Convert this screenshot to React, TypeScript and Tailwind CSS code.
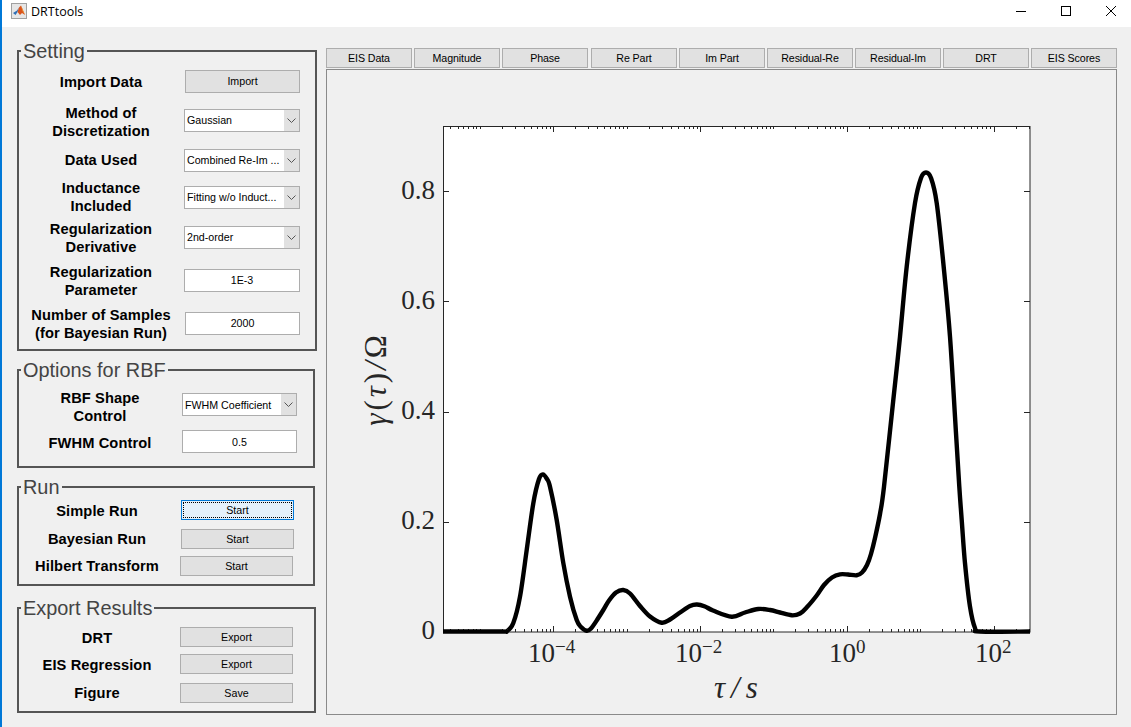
import type { ReactNode } from "react";

const TABS = ["EIS Data", "Magnitude", "Phase", "Re Part", "Im Part", "Residual-Re", "Residual-Im", "DRT", "EIS Scores"];

// curve traced from the plot, in page pixels
const CURVE: [number, number][] = [
  [443, 631.5], [500, 631.5], [507, 631], [513.3, 623], [520, 596.7], [526.7, 550], [533.3, 503.3], [539, 479],
  [543, 474.5], [547, 479], [550, 486.7], [556.7, 520], [563.3, 563], [570, 596.7], [576.7, 620], [581, 627],
  [586.7, 630.7], [591, 628.5], [597, 620], [603.3, 610], [609, 600.5], [616, 592.5], [623.3, 590], [630, 593.5],
  [640, 606], [650, 616.5], [661.7, 622.7], [670, 619.5], [680, 612.5], [690, 606], [697, 604.5], [705, 606.5],
  [713, 610.5], [731.7, 616.7], [745, 612.5], [758.3, 609], [770, 610], [780, 612.5], [791.7, 615.3], [800, 613.5],
  [808, 606], [816.7, 595.5], [824, 585], [832, 577.5], [840, 574.3], [848, 574.5], [856.7, 575.3], [862, 572.5],
  [867, 565], [871, 554], [875, 538], [880, 514], [884, 486.7], [893.3, 400], [900, 336.7], [906.7, 266.7],
  [915, 203], [921, 178], [926, 172.5], [931, 178], [936.7, 203], [944, 270], [950, 336.7], [955, 416.7],
  [959.3, 486.7], [961.7, 520], [965, 563.3], [970, 606.7], [975, 628], [980, 631.5], [1030, 631.5],
];

function curvePath() {
  let d = `M${CURVE[0][0]} ${CURVE[0][1]}`;
  for (let i = 0; i < CURVE.length - 1; i++) {
    const p0 = CURVE[Math.max(i - 1, 0)];
    const p1 = CURVE[i];
    const p2 = CURVE[i + 1];
    const p3 = CURVE[Math.min(i + 2, CURVE.length - 1)];
    const c1x = p1[0] + (p2[0] - p0[0]) / 6;
    const c1y = p1[1] + (p2[1] - p0[1]) / 6;
    const c2x = p2[0] - (p3[0] - p1[0]) / 6;
    const c2y = p2[1] - (p3[1] - p1[1]) / 6;
    d += `C${c1x.toFixed(1)} ${c1y.toFixed(1)} ${c2x.toFixed(1)} ${c2y.toFixed(1)} ${p2[0]} ${p2[1]}`;
  }
  return d;
}

const xOf = (log: number) => 846.7 + 73.4 * log;
const yOf = (v: number) => 632 - 551 * v;

function xTicks() {
  const ticks: { x: number; major: boolean }[] = [];
  for (let n = -6; n <= 2; n++) {
    for (let m = 1; m <= 9; m++) {
      const x = xOf(n + Math.log10(m));
      if (x > 444 && x < 1029) ticks.push({ x, major: m === 1 && n % 2 === 0 });
    }
  }
  return ticks;
}

function Chart() {
  const ax = "#262626";
  const serif = "'Liberation Serif', serif";
  return (
    <svg viewBox="327 70 789 644" width="789" height="644" className="block">
      <rect x="443.5" y="126.5" width="586.5" height="505.5" fill="#fff" stroke={ax} strokeWidth="1" />
      {xTicks().map((t) => {
        const len = t.major ? 6 : 3;
        const x = Math.round(t.x) + 0.5;
        return (
          <g key={t.x} stroke={ax} strokeWidth="1">
            <line x1={x} x2={x} y1={632} y2={632 - len} />
            <line x1={x} x2={x} y1={126} y2={126 + len} />
          </g>
        );
      })}
      {[0.2, 0.4, 0.6, 0.8].map((v) => {
        const y = Math.round(yOf(v)) + 0.5;
        return (
          <g key={v} stroke={ax} strokeWidth="1">
            <line x1={443} x2={449} y1={y} y2={y} />
            <line x1={1024} x2={1030} y1={y} y2={y} />
          </g>
        );
      })}
      <path d={curvePath()} fill="none" stroke="#000" strokeWidth="4.4" strokeLinejoin="round" />
      <g fontFamily={serif} fontSize="27" fill={ax} textAnchor="end">
        <text x="435" y="639">0</text>
        <text x="435" y="529">0.2</text>
        <text x="435" y="419">0.4</text>
        <text x="435" y="309">0.6</text>
        <text x="435" y="199">0.8</text>
      </g>
      <g fontFamily={serif} fontSize="27" fill={ax}>
        {[
          { x: 528, e: "−4" },
          { x: 675, e: "−2" },
          { x: 829, e: "0" },
          { x: 975, e: "2" },
        ].map((t) => (
          <text key={t.e} x={t.x} y="662">
            10
            <tspan fontSize="19" dy="-9">{t.e}</tspan>
          </text>
        ))}
      </g>
      <text x="714" y="698" fontFamily={serif} fontSize="31" fontStyle="italic" fill={ax} letterSpacing="6">
        τ/s
      </text>
      <text
        transform="translate(386 379) rotate(-90)"
        textAnchor="middle"
        fontFamily={serif}
        fontSize="31"
        fill={ax}
        letterSpacing="3"
      >
        <tspan fontStyle="italic">γ</tspan>(<tspan fontStyle="italic">τ</tspan>)<tspan fontStyle="italic">/</tspan>Ω
      </text>
    </svg>
  );
}

function Panel({ title, className, children }: { title: string; className: string; children: ReactNode }) {
  return (
    <div className={`relative border-2 border-[#555] ${className}`}>
      <span className="absolute left-[2px] top-[-13px] bg-[#f0f0f0] pl-[2px] pr-[2px] text-[19.9px] leading-[24px] text-[#444]">
        {title}
      </span>
      {children}
    </div>
  );
}

function Row({ label, labelClass, className, children }: { label: ReactNode; labelClass: string; className: string; children: ReactNode }) {
  return (
    <div className={`flex items-center ${className}`}>
      <div className={`text-center text-[14.67px] font-bold leading-[18px] tracking-[0.1px] text-black ${labelClass}`}>{label}</div>
      {children}
    </div>
  );
}

function Btn({ text, className }: { text: string; className: string }) {
  return (
    <button type="button" className={`border border-[#adadad] bg-[#e1e1e1] text-[10.67px] text-black ${className}`}>
      {text}
    </button>
  );
}

function Drop({ text, className }: { text: string; className: string }) {
  return (
    <div className={`flex h-[23px] items-stretch border border-[#adadad] bg-white text-[10.67px] text-black ${className}`}>
      <span className="flex flex-1 items-center overflow-hidden whitespace-nowrap pl-[2px]">{text}</span>
      <span className="flex w-[15px] items-center justify-center bg-[#e1e1e1]">
        <svg width="9" height="5" viewBox="0 0 9 5" fill="none" stroke="#555" strokeWidth="1">
          <path d="M0.5 0.5L4.5 4.5L8.5 0.5" />
        </svg>
      </span>
    </div>
  );
}

function Field({ text, className }: { text: string; className: string }) {
  return (
    <div className={`flex h-[23px] items-center justify-center border border-[#adadad] bg-white text-[10.67px] text-black ${className}`}>
      {text}
    </div>
  );
}

function MatlabIcon() {
  return (
    <svg width="16" height="16" viewBox="0 0 16 16" className="shrink-0">
      <rect x="0.5" y="0.5" width="15" height="15" fill="#e6e6e6" stroke="#a0a0a0" />
      <path d="M2 10L6 7.5L8 4.5L6.5 9L4.5 12Z" fill="#2f6fb5" />
      <path d="M8 4.5L10 2.5L14 12L11 10L9 12L6.5 9Z" fill="#d9541e" />
      <path d="M10 2.5L14 12L11.5 8Z" fill="#f0a030" />
    </svg>
  );
}

export default function App() {
  return (
    <div className="flex h-[727px] w-[1131px] flex-col overflow-hidden border-l-2 border-[#0078d7] bg-[#f0f0f0] font-['Liberation_Sans',sans-serif]">
      {/* Title bar */}
      <div className="flex h-[27px] shrink-0 items-start bg-white pl-[9px] pr-[15px] pt-[3px]">
        <MatlabIcon />
        <span className="ml-[4px] font-['Open_Sans',sans-serif] text-[12.5px] leading-[18px] text-black">DRTtools</span>
        <div className="ml-auto mt-[3px] flex items-center gap-[35px]">
          <svg width="10" height="10" viewBox="0 0 10 10" stroke="#000" strokeWidth="1">
            <path d="M0 5.5H10" />
          </svg>
          <svg width="10" height="10" viewBox="0 0 10 10" fill="none" stroke="#000" strokeWidth="1">
            <rect x="0.5" y="0.5" width="9" height="9" />
          </svg>
          <svg width="10" height="10" viewBox="0 0 10 10" stroke="#000" strokeWidth="1">
            <path d="M0 0L10 10M10 0L0 10" />
          </svg>
        </div>
      </div>

      <div className="flex flex-1">
        {/* Left controls */}
        <div className="w-[324px] shrink-0 pl-[15px] pt-[23px]">
          <Panel title="Setting" className="h-[301px] w-[300px] pt-[10px]">
            <Row label="Import Data" labelClass="w-[164px] pt-[2px]" className="h-[38px]">
              <Btn text="Import" className="ml-[2px] h-[23px] w-[115px]" />
            </Row>
            <Row label={<>Method of<br />Discretization</>} labelClass="w-[164px] pt-[4px]" className="h-[40px]">
              <Drop text="Gaussian" className="ml-[1px] w-[116px]" />
            </Row>
            <Row label="Data Used" labelClass="w-[164px]" className="h-[40px]">
              <Drop text="Combined Re-Im ..." className="ml-[1px] w-[116px]" />
            </Row>
            <Row label={<>Inductance<br />Included</>} labelClass="w-[164px]" className="h-[34px]">
              <Drop text="Fitting w/o Induct..." className="ml-[1px] w-[116px]" />
            </Row>
            <Row label={<>Regularization<br />Derivative</>} labelClass="w-[164px] pt-[2px]" className="h-[46px]">
              <Drop text="2nd-order" className="ml-[1px] w-[116px]" />
            </Row>
            <Row label={<>Regularization<br />Parameter</>} labelClass="w-[164px] pt-[2px]" className="h-[40px]">
              <Field text="1E-3" className="ml-[1px] w-[116px]" />
            </Row>
            <Row label={<>Number of Samples<br />(for Bayesian Run)</>} labelClass="w-[164px] pt-[2px]" className="h-[46px]">
              <Field text="2000" className="ml-[2px] w-[115px]" />
            </Row>
          </Panel>

          <Panel title="Options for RBF" className="mt-[18px] h-[99px] w-[298px] pt-[15px]">
            <Row label={<>RBF Shape<br />Control</>} labelClass="w-[162px] pt-[4px]" className="h-[37px]">
              <Drop text="FWHM Coefficient" className="ml-[1px] w-[115px]" />
            </Row>
            <Row label="FWHM Control" labelClass="w-[162px] pt-[2px]" className="h-[37px]">
              <Field text="0.5" className="ml-[1px] w-[115px]" />
            </Row>
          </Panel>

          <Panel title="Run" className="mt-[18px] h-[100px] w-[298px] pt-[8px]">
            <Row label="Simple Run" labelClass="w-[156px] pt-[1px]" className="h-[28px]">
              <button
                type="button"
                className="ml-[6px] h-[20px] w-[113px] border border-[#0078d7] bg-[#e5f1fb] p-[1px] text-[10.67px] text-black"
              >
                <span className="flex h-full w-full items-center justify-center border border-dotted border-black">Start</span>
              </button>
            </Row>
            <Row label="Bayesian Run" labelClass="w-[156px]" className="h-[29px]">
              <Btn text="Start" className="ml-[6px] h-[20px] w-[113px]" />
            </Row>
            <Row label="Hilbert Transform" labelClass="w-[156px]" className="h-[26px]">
              <Btn text="Start" className="ml-[5px] h-[20px] w-[113px]" />
            </Row>
          </Panel>

          <Panel title="Export Results" className="mt-[21px] h-[106px] w-[299px] pt-[14px]">
            <Row label="DRT" labelClass="w-[156px] pt-[2px]" className="h-[27px]">
              <Btn text="Export" className="ml-[5px] h-[20px] w-[113px]" />
            </Row>
            <Row label="EIS Regression" labelClass="w-[156px] pt-[2px]" className="h-[27px]">
              <Btn text="Export" className="ml-[5px] h-[20px] w-[113px]" />
            </Row>
            <Row label="Figure" labelClass="w-[156px]" className="h-[31px]">
              <Btn text="Save" className="ml-[5px] h-[20px] w-[113px]" />
            </Row>
          </Panel>
        </div>

        {/* Plot area */}
        <div className="w-[791px] shrink-0 pt-[21px]">
          <div className="flex gap-[2px]">
            {TABS.map((tab) => (
              <button
                type="button"
                key={tab}
                className={`h-[20px] w-[86px] border border-[#adadad] bg-[#e1e1e1] text-[10.67px] tracking-[-0.1px] text-black ${
                  tab === "Re Part" ? "ml-[1px]" : ""
                }`}
              >
                {tab}
              </button>
            ))}
          </div>
          <div className="mt-[1px] h-[646px] w-[791px] border border-[#8a8a8a]">
            <Chart />
          </div>
        </div>
      </div>
    </div>
  );
}
